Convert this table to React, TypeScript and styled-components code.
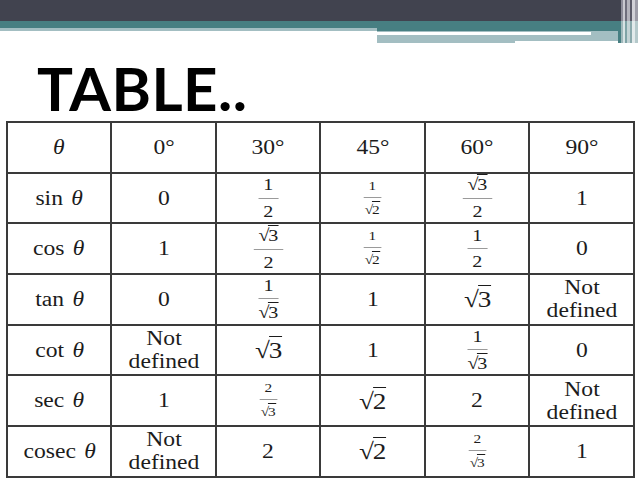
import React from 'react';
import styled, { createGlobalStyle } from 'styled-components';

const GlobalStyle = createGlobalStyle`
  html, body {
    margin: 0;
    padding: 0;
    background: #ffffff;
    overflow: hidden;
  }
`;

const ScPage = styled.div`
  width: 638px;
  height: 479px;
  background: #ffffff;
`;

// banner at the top of the slide
const ScBanner = styled.div`
  display: flex;
  flex-direction: row;
  height: 44px;
`;

const ScBands = styled.div`
  flex: 1;
  display: flex;
  flex-direction: column;
`;

const ScDark = styled.div`
  height: 21px;
  background: #41434f;
`;

const ScBandRow = styled.div`
  display: flex;
  flex-direction: row;
`;

const ScBandLeft = styled.div`
  width: 377px;
  display: flex;
  flex-direction: column;
`;

const ScBandRight = styled.div`
  flex: 1;
  display: flex;
  flex-direction: column;
`;

const ScStrip = styled.div<{ $h: number; $color: string }>`
  height: ${p => p.$h}px;
  background: ${p => p.$color};
`;

const ScLightBlock = styled.div`
  height: 12px;
  background: #a3bec2;
  display: flex;
  flex-direction: column;
  justify-content: space-between;
`;

const ScWhiteLine = styled.div`
  width: 214px;
  height: 3px;
  margin-top: 1px;
  background: #ffffff;
`;

const ScWhiteNotch = styled.div`
  height: 2px;
  margin-left: 138px;
  background: #ffffff;
`;

const ScStripes = styled.div`
  width: 20px;
  height: 43px;
  display: flex;
  flex-direction: row;
`;

const ScStripe = styled.div<{ $w: number; $top: string; $bottom: string }>`
  width: ${p => p.$w}px;
  background: linear-gradient(${p => p.$top} 0 50%, ${p => p.$bottom} 50% 100%);
`;

const ScTitle = styled.h1`
  margin: 0;
  height: 74px;
  padding-left: 37px;
  padding-bottom: 3px;
  display: flex;
  align-items: flex-end;
  font-family: 'Lato', 'Liberation Sans', sans-serif;
  font-weight: 700;
  font-size: 60px;
  line-height: 60px;
  color: #000000;
  letter-spacing: 0.5px;
`;

const ScTable = styled.table`
  margin-left: 6px;
  width: 629px;
  border-collapse: collapse;
  font-family: 'Liberation Serif', 'Times New Roman', serif;
  color: #1c1c1c;
`;

const ScCell = styled.td`
  height: 48.7px;
  padding: 0;
  border: 2px solid #3a3a3a;
  text-align: center;
  vertical-align: middle;
  width: 16.66%;
`;

// the source is a stretched pdf image, so the text is a bit wide
const ScWide = styled.span<{ $size?: number }>`
  display: inline-block;
  font-size: ${p => p.$size || 20}px;
  line-height: 1.15;
  transform: scaleX(1.18);
`;

const ScTheta = styled.i`
  margin-left: 7px;
`;

const ScFrac = styled.span<{ $size: number }>`
  display: inline-flex;
  flex-direction: column;
  align-items: center;
  vertical-align: middle;
  font-size: ${p => p.$size}px;
  line-height: 1.15;
  transform: scaleX(1.18);
`;

const ScFracTop = styled.span`
  padding: 0 4px 3px;
  border-bottom: 1px solid #9a9a9a;
`;

const ScFracBottom = styled.span`
  padding-top: 3px;
`;

const ScRoot = styled.span`
  white-space: nowrap;
`;

const ScRadicand = styled.span<{ $big?: boolean }>`
  display: inline-block;
  border-top: 1px solid #1c1c1c;
  line-height: 1;
  padding-top: ${p => (p.$big ? 2 : 1)}px;
  margin-left: -1px;
`;

const Sqrt = ({ n, big }: { n: string; big?: boolean }) => (
  <ScRoot>
    √<ScRadicand $big={big}>{n}</ScRadicand>
  </ScRoot>
);

const Frac = ({ top, bottom, size = 17 }: { top: React.ReactNode; bottom: React.ReactNode; size?: number }) => (
  <ScFrac $size={size}>
    <ScFracTop>{top}</ScFracTop>
    <ScFracBottom>{bottom}</ScFracBottom>
  </ScFrac>
);

const ND = (
  <ScWide>
    Not
    <br />
    defined
  </ScWide>
);

const head = ['0°', '30°', '45°', '60°', '90°'];

const rows: { fn: string; values: React.ReactNode[] }[] = [
  {
    fn: 'sin',
    values: [
      <ScWide>0</ScWide>,
      <Frac top="1" bottom="2" />,
      <Frac top="1" bottom={<Sqrt n="2" />} size={13} />,
      <Frac top={<Sqrt n="3" />} bottom="2" />,
      <ScWide>1</ScWide>,
    ],
  },
  {
    fn: 'cos',
    values: [
      <ScWide>1</ScWide>,
      <Frac top={<Sqrt n="3" />} bottom="2" />,
      <Frac top="1" bottom={<Sqrt n="2" />} size={13} />,
      <Frac top="1" bottom="2" />,
      <ScWide>0</ScWide>,
    ],
  },
  {
    fn: 'tan',
    values: [
      <ScWide>0</ScWide>,
      <Frac top="1" bottom={<Sqrt n="3" />} />,
      <ScWide>1</ScWide>,
      <ScWide $size={23}><Sqrt n="3" big /></ScWide>,
      ND,
    ],
  },
  {
    fn: 'cot',
    values: [
      ND,
      <ScWide $size={23}><Sqrt n="3" big /></ScWide>,
      <ScWide>1</ScWide>,
      <Frac top="1" bottom={<Sqrt n="3" />} />,
      <ScWide>0</ScWide>,
    ],
  },
  {
    fn: 'sec',
    values: [
      <ScWide>1</ScWide>,
      <Frac top="2" bottom={<Sqrt n="3" />} size={13} />,
      <ScWide $size={23}><Sqrt n="2" big /></ScWide>,
      <ScWide>2</ScWide>,
      ND,
    ],
  },
  {
    fn: 'cosec',
    values: [
      ND,
      <ScWide>2</ScWide>,
      <ScWide $size={23}><Sqrt n="2" big /></ScWide>,
      <Frac top="2" bottom={<Sqrt n="3" />} size={13} />,
      <ScWide>1</ScWide>,
    ],
  },
];

const stripes = [
  { w: 3, top: '#41434f', bottom: '#477f82' },
  { w: 2, top: '#8d8c99', bottom: '#9fb8bb' },
  { w: 2, top: '#c9c8cf', bottom: '#d7e3e4' },
  { w: 2, top: '#6e6d7b', bottom: '#7fa3a6' },
  { w: 3, top: '#b3b2bb', bottom: '#c3d3d5' },
  { w: 2, top: '#5b5a68', bottom: '#8aa9ac' },
  { w: 3, top: '#d2d1d7', bottom: '#e2eaeb' },
  { w: 3, top: '#9d9ca7', bottom: '#b5c9cb' },
];

export default function App() {
  return (
    <ScPage>
      <GlobalStyle />
      <ScBanner>
        <ScBands>
          <ScDark />
          <ScBandRow>
            <ScBandLeft>
              <ScStrip $h={7} $color="#477f82" />
              <ScStrip $h={3} $color="#a3bec2" />
            </ScBandLeft>
            <ScBandRight>
              <ScStrip $h={10} $color="#477f82" />
              <ScLightBlock>
                <ScWhiteLine />
                <ScWhiteNotch />
              </ScLightBlock>
            </ScBandRight>
          </ScBandRow>
        </ScBands>
        <ScStripes>
          {stripes.map((s, i) => (
            <ScStripe key={i} $w={s.w} $top={s.top} $bottom={s.bottom} />
          ))}
        </ScStripes>
      </ScBanner>

      <ScTitle>TABLE..</ScTitle>

      <ScTable>
        <tbody>
          <tr>
            <ScCell>
              <ScWide><i>θ</i></ScWide>
            </ScCell>
            {head.map(h => (
              <ScCell key={h}>
                <ScWide>{h}</ScWide>
              </ScCell>
            ))}
          </tr>
          {rows.map(r => (
            <tr key={r.fn}>
              <ScCell>
                <ScWide>
                  {r.fn}
                  <ScTheta>θ</ScTheta>
                </ScWide>
              </ScCell>
              {r.values.map((v, i) => (
                <ScCell key={i}>{v}</ScCell>
              ))}
            </tr>
          ))}
        </tbody>
      </ScTable>
    </ScPage>
  );
}
